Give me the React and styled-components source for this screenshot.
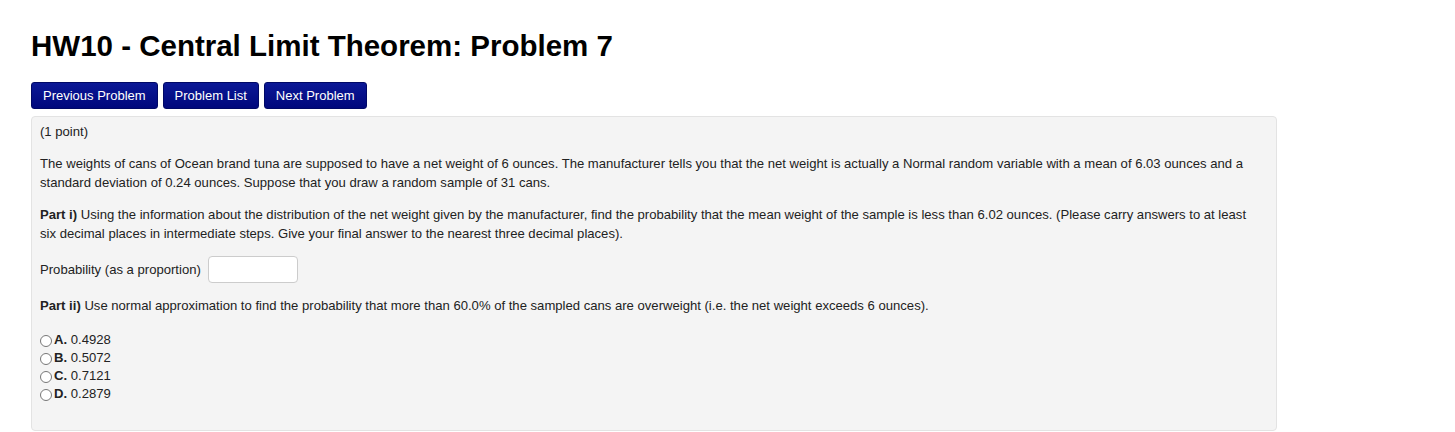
import React from "react";
import styled, { createGlobalStyle } from "styled-components";

const GlobalStyle = createGlobalStyle`
  body {
    margin: 0;
    background: #fff;
    font-family: "Liberation Sans", Arial, sans-serif;
  }
`;

const Page = styled.div`
  padding: 26px 178px 0 31px;
`;

const Title = styled.h1`
  margin: 0 0 16px;
  font-size: 29.5px;
  line-height: 40px;
  font-weight: bold;
  color: #000;
`;

const NavBar = styled.div`
  display: flex;
  gap: 5px;
  margin-bottom: 7px;
`;

const NavButton = styled.button`
  height: 27px;
  padding: 0 11px;
  border: 1px solid #000866;
  border-radius: 3px;
  background: linear-gradient(#0b1896, #00087c);
  color: #fff;
  font-family: "Liberation Sans", Arial, sans-serif;
  font-size: 13px;
  cursor: pointer;
`;

const Panel = styled.div`
  background: #f4f4f4;
  border: 1px solid #e3e3e3;
  border-radius: 4px;
  padding: 5px 18px 28px 8px;
  color: #222;
  font-size: 13.1px;
  line-height: 19px;
`;

const Para = styled.p`
  margin: 0 0 13px;
`;

const PartPara = styled(Para)`
  margin-top: 1px;
`;

const AnswerRow = styled.div`
  display: flex;
  align-items: center;
  gap: 7px;
  margin: 0 0 13px;
`;

const AnswerInput = styled.input`
  width: 90px;
  height: 27px;
  box-sizing: border-box;
  border: 1px solid #ccc;
  border-radius: 4px;
  background: #fff;
`;

const Options = styled.div`
  display: flex;
  flex-direction: column;
  margin-top: 15px;
`;

const Option = styled.label`
  display: flex;
  align-items: center;
  height: 18px;
`;

const Radio = styled.input`
  width: 12px;
  height: 12px;
  margin: 3px 2px 0 0;
`;

const choices = [
  ["A.", "0.4928"],
  ["B.", "0.5072"],
  ["C.", "0.7121"],
  ["D.", "0.2879"],
];

export default function App() {
  return (
    <>
      <GlobalStyle />
      <Page>
        <Title>HW10 - Central Limit Theorem: Problem 7</Title>
        <NavBar>
          <NavButton>Previous Problem</NavButton>
          <NavButton>Problem List</NavButton>
          <NavButton>Next Problem</NavButton>
        </NavBar>
        <Panel>
          <Para>(1 point)</Para>
          <Para>
            The weights of cans of Ocean brand tuna are supposed to have a net
            weight of 6 ounces. The manufacturer tells you that the net weight
            is actually a Normal random variable with a mean of 6.03 ounces and
            a standard deviation of 0.24 ounces. Suppose that you draw a random
            sample of 31 cans.
          </Para>
          <PartPara>
            <b>Part i)</b> Using the information about the distribution of the
            net weight given by the manufacturer, find the probability that the
            mean weight of the sample is less than 6.02 ounces. (Please carry
            answers to at least six decimal places in intermediate steps. Give
            your final answer to the nearest three decimal places).
          </PartPara>
          <AnswerRow>
            Probability (as a proportion)
            <AnswerInput type="text" />
          </AnswerRow>
          <Para>
            <b>Part ii)</b> Use normal approximation to find the probability
            that more than 60.0% of the sampled cans are overweight (i.e. the
            net weight exceeds 6 ounces).
          </Para>
          <Options>
            {choices.map(([letter, value]) => (
              <Option key={letter}>
                <Radio type="radio" name="partii" />
                <b>{letter}</b>&nbsp;{value}
              </Option>
            ))}
          </Options>
        </Panel>
      </Page>
    </>
  );
}
